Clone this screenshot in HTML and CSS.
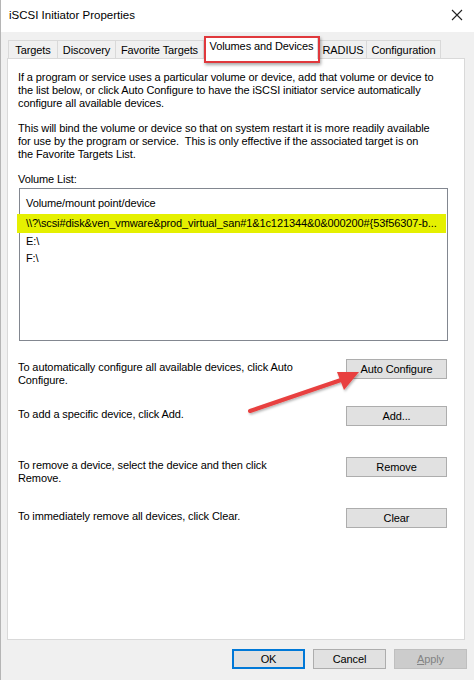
FILE: index.html
```html
<html>
<head>
<link rel="stylesheet" href="styles.css">
</head>
<body>
<div class="window">
	<div class="titlebar">
		<span class="title">iSCSI Initiator Properties</span>
		<svg class="close" width="12" height="12" viewBox="0 0 12 12"><path d="M1 1 L11 11 M11 1 L1 11" stroke="#222" stroke-width="1.1"/></svg>
	</div>

	<div class="tabs">
		<div class="tab">Targets</div>
		<div class="tab">Discovery</div>
		<div class="tab">Favorite Targets</div>
		<div class="tab selected">Volumes and Devices</div>
		<div class="tab">RADIUS</div>
		<div class="tab">Configuration</div>
	</div>

	<div class="panel">
		<p class="text">If a program or service uses a particular volume or device, add that volume or device to<br>
		the list below, or click Auto Configure to have the iSCSI initiator service automatically<br>
		configure all available devices.</p>

		<p class="text">This will bind the volume or device so that on system restart it is more readily available<br>
		for use by the program or service.&nbsp; This is only effective if the associated target is on<br>
		the Favorite Targets List.</p>

		<div class="label">Volume List:</div>
		<div class="listbox">
			<div class="listhead">Volume/mount point/device</div>
			<div class="row marked">\\?\scsi#disk&amp;ven_vmware&amp;prod_virtual_san#1&amp;1c121344&amp;0&amp;000200#{53f56307-b...</div>
			<div class="row">E:\</div>
			<div class="row">F:\</div>
		</div>

		<div class="actions">
			<div class="action">
				<span>To automatically configure all available devices, click Auto<br>Configure.</span>
				<button class="btn">Auto Configure</button>
			</div>
			<div class="action">
				<span>To add a specific device, click Add.</span>
				<button class="btn">Add...</button>
			</div>
			<div class="action">
				<span>To remove a device, select the device and then click<br>Remove.</span>
				<button class="btn">Remove</button>
			</div>
			<div class="action">
				<span>To immediately remove all devices, click Clear.</span>
				<button class="btn">Clear</button>
			</div>
		</div>
	</div>

	<div class="footer">
		<button class="btn small default">OK</button>
		<button class="btn small">Cancel</button>
		<button class="btn small disabled"><u>A</u>pply</button>
	</div>

	<svg class="arrow" width="474" height="680" viewBox="0 0 474 680">
		<defs>
			<filter id="sh" x="-20%" y="-20%" width="140%" height="140%">
				<feDropShadow dx="1" dy="1.5" stdDeviation="1.2" flood-color="#000" flood-opacity="0.3"/>
			</filter>
		</defs>
		<g filter="url(#sh)" fill="#e8413f">
			<path d="M249 411 L340 380" stroke="#e8413f" stroke-width="4" stroke-linecap="round"/>
			<path d="M358 372 L336 372 L343 390 Z"/>
		</g>
	</svg>
</div>
</body>
</html>
```

FILE: styles.css
```css
body {
    margin: 0;
    font: 11px "Liberation Sans", Arial, sans-serif;
    letter-spacing: -0.1px;
    color: #000;
}

.window {
    position: relative;
    width: 474px;
    height: 680px;
    background: #f0f0f0;
    border-left: 1px solid #b5b5b5;
    box-sizing: border-box;
    overflow: hidden;
}

.titlebar {
    height: 32px;
    background: #fff;
    display: flex;
    align-items: center;
    justify-content: space-between;
    padding: 0 11px 0 8px;
}

.title {
    font-size: 11.5px;
    letter-spacing: 0;
    margin-top: -2px;
}

.close {
    margin-top: -2px;
}

.tabs {
    display: flex;
    align-items: flex-end;
    height: 27px;
    padding-left: 7px;
}

.tab {
    position: relative;
    box-sizing: border-box;
    height: 19px;
    line-height: 18px;
    text-align: center;
    border: 1px solid #d9d9d9;
    border-bottom: none;
    margin-right: -1px;
    background: #f0f0f0;
    white-space: nowrap;
}

.tab:nth-child(1) { width: 50px; }
.tab:nth-child(2) { width: 59px; }
.tab:nth-child(3) { width: 89px; }
.tab:nth-child(4) { width: 113px; }
.tab:nth-child(5) { width: 48px; }
.tab:nth-child(6) { width: 75px; }

.tab.selected {
    height: 23px;
    line-height: 19px;
    background: #fff;
    margin: 0 1px 0 2px;
    z-index: 2;
}

.tab.selected::after {
    content: "";
    position: absolute;
    left: -2px;
    right: -3px;
    top: -1px;
    bottom: -4px;
    border: 2.5px solid #e0383c;
    box-shadow: 1px 2px 3px rgba(0,0,0,0.35);
}

.panel {
    width: 458px;
    height: 582px;
    margin-left: 6px;
    background: #fff;
    border: 1px solid #d9d9d9;
    box-sizing: border-box;
    padding: 12px 17px 0 10px;
    position: relative;
    z-index: 1;
    margin-top: -1px;
}

.text {
    margin: 0 0 12px 0;
    line-height: 13px;
    white-space: nowrap;
}

.label {
    line-height: 13px;
}

.listbox {
    margin-top: 2px;
    width: 429px;
    height: 153px;
    border: 1px solid #828790;
    box-sizing: border-box;
    margin-left: 1px;
}

.listhead {
    height: 25px;
    box-sizing: border-box;
    padding: 4px 0 0 6px;
    line-height: 20px;
}

.row {
    height: 17px;
    line-height: 17px;
    padding-left: 6px;
    white-space: nowrap;
}

.row.marked {
    background: #e5f000;
    margin-left: -3px;
    padding-left: 9px;
    margin-right: 1px;
    height: 19px;
    line-height: 19px;
    overflow: hidden;
}

.actions {
    display: grid;
    grid-template-rows: 47px 51px 51px auto;
    margin-top: 18px;
}

.action {
    display: flex;
    justify-content: space-between;
    align-items: flex-start;
    line-height: 13px;
}

.action span {
    padding-top: 2px;
}

.btn {
    font: 11px "Liberation Sans", Arial, sans-serif;
    letter-spacing: -0.1px;
    width: 101px;
    height: 20px;
    background: #e1e1e1;
    border: 1px solid #adadad;
    padding: 0;
    color: #000;
}

.footer {
    display: flex;
    justify-content: flex-end;
    gap: 8px;
    padding: 9px 7px 0 0;
}

.btn.small {
    width: 73px;
}

.btn.default {
    border: 2px solid #0078d7;
}

.btn.disabled {
    background: #cccccc;
    border-color: #bfbfbf;
    color: #838383;
}

.arrow {
    position: absolute;
    left: 0;
    top: 0;
    pointer-events: none;
    z-index: 5;
}
```
